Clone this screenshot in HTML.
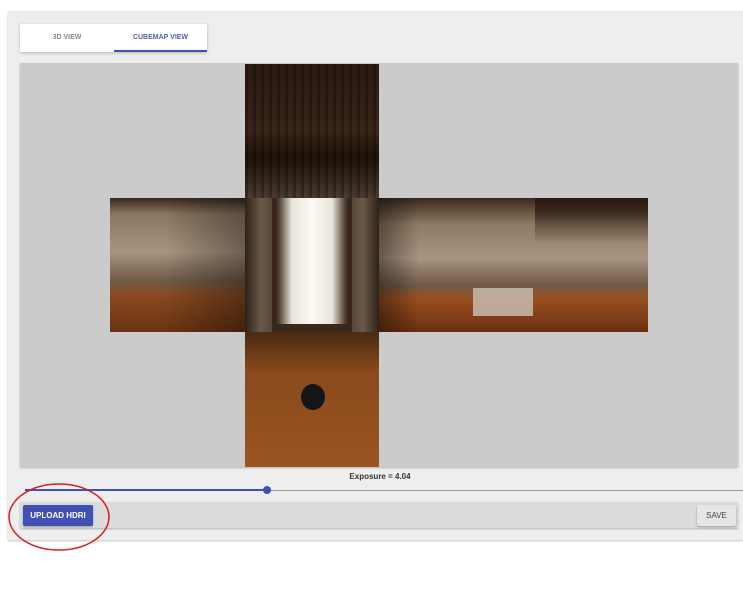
<!DOCTYPE html>
<html><head><style>
*{margin:0;padding:0;box-sizing:border-box}
body{width:743px;height:590px;background:#fff;position:relative;overflow:hidden;font-family:"Liberation Sans",Arial,sans-serif}
.a{position:absolute}
</style></head><body>
<div class="a" style="left:8px;top:11px;width:735px;height:529px;background:#eeeeee;box-shadow:0 1px 2px rgba(0,0,0,.25)"></div>
<div class="a" style="left:20px;top:24px;width:187px;height:28px;background:#fff;box-shadow:0 1px 3px rgba(0,0,0,.25)"></div>
<div class="a" style="left:20px;top:34px;width:94px;text-align:center;font-size:7px;font-weight:bold;color:#8a8a8a">3D VIEW</div>
<div class="a" style="left:114px;top:34px;width:93px;text-align:center;font-size:7px;font-weight:bold;color:#5560a8">CUBEMAP VIEW</div>
<div class="a" style="left:114px;top:50px;width:93px;height:2px;background:#3f51b5"></div>
<div class="a" style="left:20px;top:63px;width:718px;height:404px;background:#cbcbcb;box-shadow:0 1px 2px rgba(0,0,0,.25)"></div>
<!-- top face -->
<div class="a" style="left:245px;top:64px;width:134px;height:134px;background:linear-gradient(#2a1a12 0%,#3a2418 50%,#1e120b 70%,#4a3a30 100%)"></div>
<div class="a" style="left:245px;top:64px;width:134px;height:134px;background:repeating-linear-gradient(90deg,rgba(0,0,0,.25) 0 3px,rgba(0,0,0,0) 3px 8px)"></div>
<!-- middle row -->
<div class="a" style="left:110px;top:198px;width:135px;height:134px;background:linear-gradient(#3a2a1e 0%,#8a7560 12%,#a89580 40%,#6f5a48 62%,#8a4a22 72%,#6a3212 100%)"></div>
<div class="a" style="left:110px;top:198px;width:135px;height:134px;background:linear-gradient(90deg,rgba(0,0,0,0) 40%,rgba(0,0,0,.35) 100%)"></div>
<div class="a" style="left:245px;top:198px;width:134px;height:134px;background:linear-gradient(90deg,#2e2118 0%,#6a5a4a 12%,#4a3a2e 25%,#e8e4dc 35%,#faf8f2 50%,#e8e4dc 65%,#4a3a2e 75%,#6a5a4a 88%,#2e2118 100%)"></div>
<div class="a" style="left:272px;top:198px;width:80px;height:134px;border:5px solid #3a281c;border-top:none;border-bottom:8px solid #3a281c"></div>
<div class="a" style="left:379px;top:198px;width:269px;height:134px;background:linear-gradient(#3a2a1e 0%,#8f7a64 20%,#a89480 45%,#6f5a48 65%,#9a5020 75%,#6a3010 100%)"></div>
<div class="a" style="left:379px;top:198px;width:40px;height:134px;background:linear-gradient(90deg,rgba(0,0,0,.4),rgba(0,0,0,0))"></div>
<div class="a" style="left:535px;top:198px;width:113px;height:45px;background:linear-gradient(#2a1a10,rgba(60,40,28,0))"></div>
<div class="a" style="left:473px;top:288px;width:60px;height:28px;background:#c9c2b6;opacity:.8"></div>
<!-- bottom face -->
<div class="a" style="left:245px;top:332px;width:134px;height:135px;background:linear-gradient(#4a2a12 0%,#8a4a1c 30%,#9a5522 100%)"></div>
<div class="a" style="left:301px;top:384px;width:24px;height:26px;border-radius:50%;background:#151518"></div>
<!-- exposure -->
<div class="a" style="left:330px;top:472px;width:100px;text-align:center;font-size:8px;font-weight:bold;color:#333">Exposure = 4.04</div>
<div class="a" style="left:25px;top:490px;width:718px;height:1px;background:#999"></div>
<div class="a" style="left:25px;top:489px;width:242px;height:2px;background:#3f51b5"></div>
<div class="a" style="left:263px;top:486px;width:8px;height:8px;border-radius:50%;background:#3f51b5"></div>
<!-- bottom bar -->
<div class="a" style="left:20px;top:502px;width:718px;height:26px;background:#dcdcdc;box-shadow:0 1px 2px rgba(0,0,0,.25)"></div>
<div class="a" style="left:23px;top:505px;width:70px;height:21px;background:#3f51b5;border-radius:2px;box-shadow:0 1px 2px rgba(0,0,0,.3);color:#fff;font-size:8px;font-weight:bold;text-align:center;line-height:21px">UPLOAD HDRI</div>
<div class="a" style="left:697px;top:505px;width:39px;height:21px;background:#e6e6e6;border-radius:2px;box-shadow:0 1px 2px rgba(0,0,0,.3);color:#444;font-size:8px;text-align:center;line-height:21px">SAVE</div>
<svg class="a" style="left:0;top:470px" width="120" height="90"><ellipse cx="59" cy="47" rx="50" ry="33" fill="none" stroke="#d42020" stroke-width="1.5"/></svg>
</body></html>
